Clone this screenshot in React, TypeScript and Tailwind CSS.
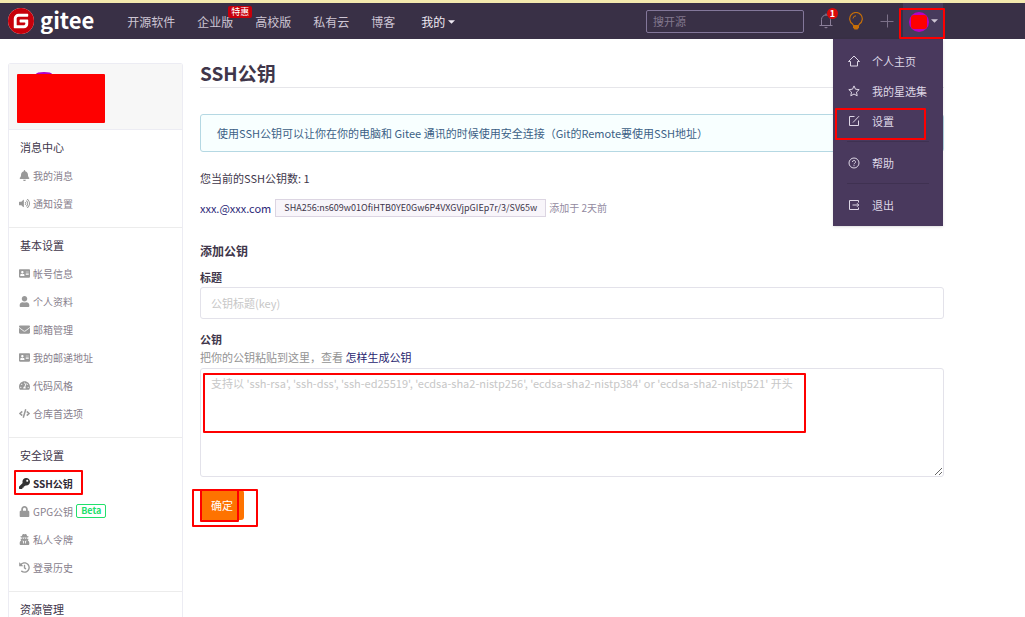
import type { ReactNode } from 'react';
import type { IconType } from 'react-icons';
import {
  FaAddressCard,
  FaBell,
  FaCode,
  FaEnvelope,
  FaHistory,
  FaKey,
  FaLock,
  FaTachometerAlt,
  FaUser,
  FaUserSecret,
  FaVolumeUp,
} from 'react-icons/fa';
import { SiGitee } from 'react-icons/si';

type Item = { label: string; icon: IconType; active?: boolean; beta?: boolean };
type Section = { title: string; items: Item[] };

const sections: Section[] = [
  {
    title: '消息中心',
    items: [
      { label: '我的消息', icon: FaBell },
      { label: '通知设置', icon: FaVolumeUp },
    ],
  },
  {
    title: '基本设置',
    items: [
      { label: '帐号信息', icon: FaAddressCard },
      { label: '个人资料', icon: FaUser },
      { label: '邮箱管理', icon: FaEnvelope },
      { label: '我的邮递地址', icon: FaAddressCard },
      { label: '代码风格', icon: FaTachometerAlt },
      { label: '仓库首选项', icon: FaCode },
    ],
  },
  {
    title: '安全设置',
    items: [
      { label: 'SSH公钥', icon: FaKey, active: true },
      { label: 'GPG公钥', icon: FaLock, beta: true },
      { label: '私人令牌', icon: FaUserSecret },
      { label: '登录历史', icon: FaHistory },
    ],
  },
  { title: '资源管理', items: [] },
];

function Highlight({ className }: { className: string }) {
  return (
    <span
      aria-hidden="true"
      className={`pointer-events-none absolute rounded-[1px] border-2 border-[#fe0000] ${className}`}
    />
  );
}

function Caret() {
  return (
    <svg viewBox="0 0 8 4" className="h-1 w-[7px]" fill="currentColor" aria-hidden="true">
      <path d="M0 0h8L4 4z" />
    </svg>
  );
}

function LineIcon({ children }: { children: ReactNode }) {
  return (
    <svg
      viewBox="0 0 12 12"
      className="size-3 shrink-0"
      fill="none"
      stroke="currentColor"
      strokeWidth="1"
      aria-hidden="true"
    >
      {children}
    </svg>
  );
}

function MenuItem({ label, icon, marked }: { label: string; icon: ReactNode; marked?: boolean }) {
  return (
    <li className="relative">
      <a href="#" className="flex h-[30px] items-center gap-3 whitespace-nowrap pl-[15px]">
        <LineIcon>{icon}</LineIcon>
        {label}
      </a>
      {marked && <Highlight className="-bottom-1 left-[2px] right-[17px] top-[2px]" />}
    </li>
  );
}

function UserMenu() {
  return (
    <ul className="absolute right-0 top-full z-10 w-[110px] bg-[#49395d] pb-[6px] pt-[7px] text-[11px] text-[#ded7e6] shadow-sm">
      <MenuItem label="个人主页" icon={<path d="M.5 6.500 6 1l5.500 5.500H9.500v4.500h-7V6.500z" />} />
      <MenuItem
        label="我的星选集"
        icon={<path d="m6 .9 1.500 3.300 3.700.4-2.700 2.500.7 3.700L6 9l-3.200 1.800.7-3.700L.8 4.600l3.700-.4z" />}
      />
      <MenuItem label="设置" marked icon={<path d="M6.500 1.500h-5v9h9v-5M5 7.500 11 1.200" />} />
      <li role="separator" className="mx-3.5 mb-[6px] mt-[5px] h-px bg-[#3f3151]" />
      <MenuItem
        label="帮助"
        icon={
          <>
            <circle cx="6" cy="6" r="5" />
            <path d="M4.500 5a1.500 1.500 0 1 1 2.300 1.200Q6 6.600 6 7.300M6 8.200v1" />
          </>
        }
      />
      <li role="separator" className="mx-3.5 mb-[6px] mt-[5px] h-px bg-[#3f3151]" />
      <MenuItem label="退出" icon={<path d="M10.500 3.500v-2h-9v9h9v-2M4.500 6h6M9 4.200 10.800 6 9 7.800" />} />
    </ul>
  );
}

function Header() {
  return (
    <header className="border-t-[3px] border-[#f3e9ae] bg-[#393046]">
      <div className="flex h-9 max-w-[943px] items-center pl-2 text-[12px] text-[#cdc5d4]">
        <a href="#" className="flex items-center gap-1.5 text-white">
          <span className="grid size-[26px] place-items-center rounded-full bg-white">
            <SiGitee className="size-[26px] text-[#c7000b]" />
          </span>
          <span className="-mt-1 text-[22px] font-bold leading-8">gitee</span>
        </a>
        <nav className="ml-[33px] mt-px flex items-center gap-[22px] whitespace-nowrap">
          <a href="#">开源软件</a>
          <a href="#" className="relative">
            企业版
            <span className="absolute -top-[7px] left-[31px] rounded-[2px] bg-[#c7000b] px-[3px] text-[9px] leading-3 text-white">
              特惠
            </span>
          </a>
          <a href="#">高校版</a>
          <a href="#">私有云</a>
          <a href="#">博客</a>
          <button className="ml-1 flex items-center gap-[3px] text-[#efeaf3]">
            我的
            <Caret />
          </button>
        </nav>
        <input
          type="search"
          aria-label="搜开源"
          placeholder="搜开源"
          className="ml-auto h-[23px] w-[158px] rounded-[2px] border border-[#83779a] bg-transparent px-1.5 text-[11px] placeholder:text-[#83788e]"
        />
        <div className="ml-[7px] flex items-center">
          <button aria-label="通知" className="relative grid h-9 w-[30px] place-items-center text-[#8b7f99]">
            <svg viewBox="0 0 14 16" className="h-4 w-3.5" fill="none" stroke="currentColor" aria-hidden="true">
              <path d="M.5 12.500h13M2.500 12.500V6.500a4.500 4.500 0 0 1 9 0v6M7 2V.500" />
              <path d="M5 14h4l-2 1.500z" fill="currentColor" stroke="none" />
            </svg>
            <span className="absolute right-[3px] top-[5px] grid size-[11px] place-items-center rounded-full bg-[#db0a0a] text-[9px] font-bold leading-none text-white">
              1
            </span>
          </button>
          <button aria-label="提示" className="grid h-9 w-[30px] place-items-center text-[#c76f08]">
            <svg viewBox="0 0 14 18" className="h-[18px] w-3.5" fill="none" stroke="currentColor" aria-hidden="true">
              <path d="M4.500 13.500 3.600 12.100A6.300 6.300 0 1 1 10.400 12.100L9.500 13.500z" strokeWidth="1.200" />
              <path d="M4 6.500A3 3 0 0 1 7 3.800" />
              <path d="M4 13.500h6v2L8.500 17.500h-3L4 15.500z" fill="currentColor" stroke="none" />
            </svg>
          </button>
          <button aria-label="新建" className="grid h-9 w-8 place-items-center text-[#7c7189]">
            <svg viewBox="0 0 14 14" className="size-3.5" stroke="currentColor" aria-hidden="true">
              <path d="M7.500 .500v13M.500 7.500h13" />
            </svg>
          </button>
          <div className="relative">
            <button
              aria-label="用户菜单"
              className="flex h-9 w-10 items-center gap-[2px] bg-[#473a5c] pl-1.5 text-[#cdc5d4]"
            >
              <span className="mt-px grid size-5 place-items-center rounded-full bg-[#b800c4]">
                <span className="h-3.5 w-4 rounded-[3px] bg-[#fe0000]" />
              </span>
              <Caret />
            </button>
            <UserMenu />
            <Highlight className="-left-1 -right-[2px] bottom-0 top-[5px] z-20" />
          </div>
        </div>
      </div>
    </header>
  );
}

function Sidebar() {
  return (
    <aside className="w-[175px] shrink-0 rounded-t-[3px] border border-b-0 border-[#ececf3]">
      <div className="h-[66px] border-b border-[#ececf3] bg-[#f7f7f7] px-2 pt-2">
        <div className="h-[2px] pl-[19px]">
          <div className="h-full w-4 rounded-[50%_50%_0_0/100%_100%_0_0] bg-[#b000c8]" />
        </div>
        <div className="h-[49px] w-[88px] rounded-[1px] bg-[#fe0000]" />
      </div>
      {sections.map((section) => (
        <section key={section.title} className="border-b border-[#ececec] pb-2.5 pt-[3px] last:border-b-0 last:pb-0">
          <h3 className="flex h-7 items-center px-[11px] text-[11px] text-[#40364a]">{section.title}</h3>
          <ul>
            {section.items.map(({ label, icon: Icon, active, beta }) => (
              <li key={label} className="relative">
                <a
                  href="#"
                  className={`flex h-7 items-center gap-[3px] px-[9px] text-[10px] ${
                    active ? 'font-bold text-[#302a36]' : 'text-[#87808c]'
                  }`}
                >
                  <span
                    className={`mt-px grid w-3 place-items-center ${active ? 'text-[#333333]' : 'text-[#999999]'}`}
                  >
                    <Icon className="size-[11px]" />
                  </span>
                  {label}
                  {beta && (
                    <span className="rounded-[2px] border border-[#21e06b] px-1 text-[9px] font-bold leading-3 text-[#21e06b]">
                      Beta
                    </span>
                  )}
                </a>
                {active && <Highlight className="bottom-[2px] left-[5px] top-px w-[69px]" />}
              </li>
            ))}
          </ul>
        </section>
      ))}
    </aside>
  );
}

function Main() {
  return (
    <main className="min-w-0 flex-1 text-[11px] leading-5 text-[#40364a]">
      <h1 className="border-b border-[#e6e6ea] pb-1 text-[19px] font-bold leading-5">SSH公钥</h1>
      <p className="mt-[26px] flex h-[38px] items-center rounded-[3px] border border-[#b5d8e3] bg-[#f8ffff] px-4 text-[#3c5f86]">
        使用SSH公钥可以让你在你的电脑和 Gitee 通讯的时候使用安全连接（Git的Remote要使用SSH地址）
      </p>
      <p className="mt-4">您当前的SSH公钥数: 1</p>
      <div className="mt-2.5 flex items-center gap-[3px]">
        <a href="#" className="mr-px text-[#2b2877]">
          xxx.@xxx.com
        </a>
        <code className="border border-[#dcd5e2] bg-[#f8f5fa] px-2 font-['Noto_Sans_CJK_SC','Noto_Sans',sans-serif] text-[9px] leading-4">
          SHA256:ns609w01OfiHTB0YE0Gw6P4VXGVjpGIEp7r/3/SV65w
        </code>
        <span className="text-[10px] text-[#938a9f]">添加于 2天前</span>
      </div>
      <form onSubmit={(e) => e.preventDefault()}>
        <h2 className="mt-[23px] text-[12px] font-bold">添加公钥</h2>
        <label htmlFor="key-title" className="mt-1.5 block font-bold">
          标题
        </label>
        <input
          id="key-title"
          type="text"
          placeholder="公钥标题(key)"
          className="block h-8 w-full rounded-[3px] border border-[#e3e2ea] px-2.5 placeholder:text-[#c7c7c7]"
        />
        <label htmlFor="key-body" className="mt-[11px] block font-bold leading-[18px]">
          公钥
        </label>
        <p className="leading-[18px] text-[#939393]">
          把你的公钥粘贴到这里，查看{' '}
          <a href="#" className="text-[#28256f]">
            怎样生成公钥
          </a>
        </p>
        <div className="relative mt-[2px]">
          <textarea
            id="key-body"
            placeholder="支持以 'ssh-rsa', 'ssh-dss', 'ssh-ed25519', 'ecdsa-sha2-nistp256', 'ecdsa-sha2-nistp384' or 'ecdsa-sha2-nistp521' 开头"
            className="block h-[109px] w-full resize rounded-[3px] border border-[#e3e2ea] px-2.5 py-1 placeholder:text-[#c7c7c7]"
          />
          <Highlight className="left-[3px] top-[5px] h-[60px] w-[603px]" />
        </div>
        <div className="relative mt-[13px] w-fit">
          <button type="submit" className="block h-[30px] rounded-[3px] bg-[#fe7300] px-[11px] text-white">
            确定
          </button>
          <Highlight className="-top-px left-0 h-[33px] w-[39px]" />
          <Highlight className="-left-2 -right-3.5 -top-px h-[38px]" />
        </div>
      </form>
    </main>
  );
}

export default function App() {
  return (
    <div className="bg-white font-['Noto_Sans_CJK_SC','Noto_Sans',sans-serif]">
      <Header />
      <div className="mt-6 flex max-w-[944px] gap-[17px] pl-2">
        <Sidebar />
        <Main />
      </div>
    </div>
  );
}
